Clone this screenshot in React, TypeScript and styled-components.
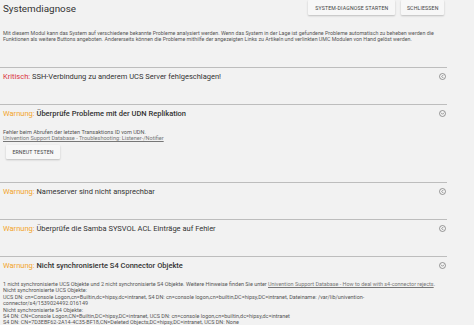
import React from 'react'
import styled, { createGlobalStyle } from 'styled-components'

const GlobalStyle = createGlobalStyle`
  html, body {
    margin: 0;
    padding: 0;
    background: #f2f2f2;
    font-family: Roboto, 'Liberation Sans', sans-serif;
    color: #333;
  }
`

const Page = styled.div`
  width: 447px;
  height: 325px;
  overflow: hidden;
`

const TopBar = styled.div`
  display: flex;
  justify-content: space-between;
  align-items: flex-start;
  height: 15px;
`

const Title = styled.h1`
  margin: 0;
  padding: 3px 0 0 3px;
  font-size: 9.9px;
  font-weight: 400;
  line-height: 11px;
  color: #333;
`

const Actions = styled.div`
  display: flex;
  gap: 6px;
  margin-right: 3px;
`

const Button = styled.button<{ $pad?: number }>`
  height: 15px;
  padding: 0 ${(p) => p.$pad ?? 8}px;
  border: none;
  border-radius: 1px;
  background: #f7f7f7;
  box-shadow: 0 1px 2px rgba(0, 0, 0, 0.22);
  font-family: Roboto, 'Liberation Sans', sans-serif;
  font-size: 5.2px;
  letter-spacing: 0.15px;
  text-transform: uppercase;
  color: #444;
  cursor: pointer;
`

const Intro = styled.p`
  margin: 15px 0 24px;
  padding-left: 3px;
  font-size: 5.3px;
  line-height: 6.3px;
  color: #555;
`

const Section = styled.section`
  border-top: 1px solid #bdbdbd;
  margin-bottom: 18px;
`

const Header = styled.div<{ $open?: boolean }>`
  display: flex;
  justify-content: space-between;
  align-items: center;
  height: 18px;
  padding: 0 1px 0 3px;
  font-size: 7.5px;
  font-weight: ${(p) => (p.$open ? 500 : 400)};
  color: #333;
`

const Level = styled.span<{ $kind: 'critical' | 'warning' }>`
  color: ${(p) => (p.$kind === 'critical' ? '#d9303d' : '#f2a52a')};
  font-weight: 400;
`

const Body = styled.div<{ $size: number }>`
  padding: 6px 0 5px 3px;
  font-size: ${(p) => p.$size}px;
  line-height: 6.4px;
  color: #555;
`

const Line = styled.div``

const DocLink = styled.a`
  color: #777;
  text-decoration: underline;
`

const RetryButton = styled(Button)`
  height: 14px;
  margin: 3.5px 0 0 3px;
  width: 54px;
  padding: 0;
`

const Chevron: React.FC<{ open?: boolean }> = ({ open }) => (
  <svg width="7" height="7" viewBox="0 0 14 14" fill="none" stroke="#666" strokeWidth="1.3">
    <circle cx="7" cy="7" r="6" />
    {open ? (
      <polyline points="4.5,6 7,8.5 9.5,6" strokeLinecap="round" strokeLinejoin="round" />
    ) : (
      <polyline points="8,4.5 5.5,7 8,9.5" strokeLinecap="round" strokeLinejoin="round" />
    )}
  </svg>
)

interface Problem {
  kind: 'critical' | 'warning'
  title: string
  open?: boolean
  size?: number
  body?: React.ReactNode
}

const problems: Problem[] = [
  { kind: 'critical', title: 'SSH-Verbindung zu anderem UCS Server fehlgeschlagen!' },
  {
    kind: 'warning',
    title: 'Überprüfe Probleme mit der UDN Replikation',
    open: true,
    size: 5.55,
    body: (
      <>
        <Line>Fehler beim Abrufen der letzten Transaktions ID vom UDN.</Line>
        <Line>
          <DocLink href="#">Univention Support Database - Troubleshooting: Listener-/Notifier</DocLink>
        </Line>
        <RetryButton>Erneut testen</RetryButton>
      </>
    ),
  },
  { kind: 'warning', title: 'Nameserver sind nicht ansprechbar' },
  { kind: 'warning', title: 'Überprüfe die Samba SYSVOL ACL Einträge auf Fehler' },
  {
    kind: 'warning',
    title: 'Nicht synchronisierte S4 Connector Objekte',
    open: true,
    size: 5.45,
    body: (
      <>
        <Line>
          1 nicht synchronisierte UCS Objekte und 2 nicht synchronisierte S4 Objekte. Weitere Hinweise finden Sie
          unter <DocLink href="#">Univention Support Database - How to deal with s4-connector rejects</DocLink>.
        </Line>
        <Line>Nicht synchronisierte UCS Objekte:</Line>
        <Line>
          UCS DN: cn=Console Logon,cn=Builtin,dc=hipsy,dc=intranet, S4 DN: cn=console logon,cn=builtin,DC=hipsy,DC=intranet,
          Dateiname: /var/lib/univention-connector/s4/1539024492.016149
        </Line>
        <Line>Nicht synchronisierte S4 Objekte:</Line>
        <Line>
          S4 DN: CN=Console Logon,CN=Builtin,DC=hipsy,DC=intranet, UCS DN: cn=console logon,cn=builtin,dc=hipsy,dc=intranet
        </Line>
        <Line>
          S4 DN: CN=7D3EBF62-2A14-4C35-BF18,CN=Deleted Objects,DC=hipsy,DC=intranet, UCS DN: None
        </Line>
      </>
    ),
  },
]

export default function App() {
  return (
    <Page>
      <GlobalStyle />
      <TopBar>
        <Title>Systemdiagnose</Title>
        <Actions>
          <Button $pad={7}>System-Diagnose starten</Button>
          <Button $pad={5.5}>Schliessen</Button>
        </Actions>
      </TopBar>
      <Intro>
        Mit diesem Modul kann das System auf verschiedene bekannte Probleme analysiert werden. Wenn das System in der
        Lage ist gefundene Probleme automatisch zu beheben werden die Funktionen als weitere Buttons angeboten.
        Andererseits können die Probleme mithilfe der angezeigten Links zu Artikeln und verlinkten UMC Modulen von Hand
        gelöst werden.
      </Intro>
      {problems.map((p) => (
        <Section key={p.title}>
          <Header $open={p.open}>
            <span>
              <Level $kind={p.kind}>{p.kind === 'critical' ? 'Kritisch:' : 'Warnung:'}</Level> {p.title}
            </span>
            <Chevron open={p.open} />
          </Header>
          {p.open && <Body $size={p.size ?? 5.5}>{p.body}</Body>}
        </Section>
      ))}
    </Page>
  )
}
